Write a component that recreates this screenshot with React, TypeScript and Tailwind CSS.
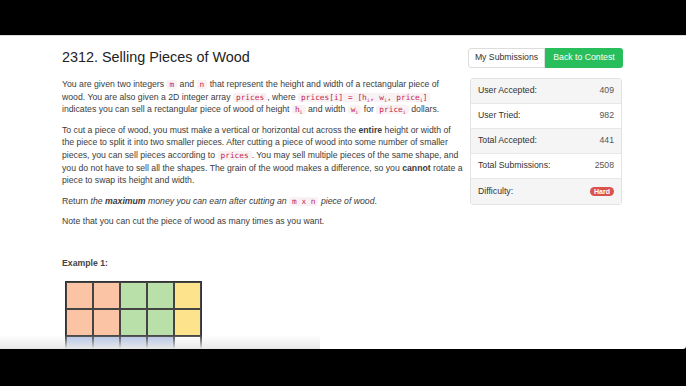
import React from "react";

const C = ({ children }: { children: React.ReactNode }) => (
  <code className="rounded-[2px] bg-[#f9f2f4] px-[3px] py-0 font-['DejaVu_Sans_Mono',monospace] text-[7.8px] leading-none text-[#c7254e]">
    {children}
  </code>
);

const S = ({ children }: { children: React.ReactNode }) => (
  <span className="relative top-[2px] text-[5px] leading-none">{children}</span>
);

const Row = ({ label, value, gray }: { label: string; value: React.ReactNode; gray?: boolean }) => (
  <div className={`flex h-[25px] items-center justify-between border-b border-[#e8e8e8] px-[7px] last:border-b-0 ${gray ? "bg-[#f5f5f5]" : "bg-white"}`}>
    <span>{label}</span>
    <span className="text-[#555]">{value}</span>
  </div>
);

export default function App() {
  const cell = "h-[27px] w-[27px]";
  return (
    <div className="flex h-[386px] w-[686px] flex-col bg-black font-['Liberation_Sans',Arial,sans-serif]">
      <div className="h-[36px] shrink-0 border-b border-[#ddd]" />
      <div className="relative flex h-[313px] shrink-0 gap-[4px] overflow-hidden rounded-br-[3px] bg-white pl-[62px] pt-[10px] text-[#333]">
        <div className="w-[402px] shrink-0">
          <h1 className="mt-[1px] text-[14.4px] leading-[20px] text-[#222]">2312. Selling Pieces of Wood</h1>
          <div className="mt-[11px] text-[8.7px] leading-[12.6px] text-[#3c3c3c]">
            <p>
              You are given two integers <C>m</C> and <C>n</C> that represent the height and width of a rectangular piece of wood. You are also given a 2D integer array <C>prices</C>, where <C>prices[i] = [h<S>i</S>, w<S>i</S>, price<S>i</S>]</C> indicates you can sell a rectangular piece of wood of height <C>h<S>i</S></C> and width <C>w<S>i</S></C> for <C>price<S>i</S></C> dollars.
            </p>
            <p className="mt-[8px]">
              To cut a piece of wood, you must make a vertical or horizontal cut across the <b>entire</b> height or width of the piece to split it into two smaller pieces. After cutting a piece of wood into some number of smaller pieces, you can sell pieces according to <C>prices</C>. You may sell multiple pieces of the same shape, and you do not have to sell all the shapes. The grain of the wood makes a difference, so you <b>cannot</b> rotate a piece to swap its height and width.
            </p>
            <p className="mt-[8px]">
              Return <i>the <b>maximum</b> money you can earn after cutting an </i><C>m x n</C><i> piece of wood</i>.
            </p>
            <p className="mt-[8px]">Note that you can cut the piece of wood as many times as you want.</p>
            <p className="mt-[29px] font-bold text-[#444]">Example 1:</p>
          </div>
          <div className="ml-[3px] mt-[11px] inline-grid grid-cols-5 border border-[#333]">
            {[
              "bg-[#fbc4a4]", "bg-[#fbc4a4]", "bg-[#b9e0a8]", "bg-[#b9e0a8]", "bg-[#fde48c]",
              "bg-[#fbc4a4]", "bg-[#fbc4a4]", "bg-[#b9e0a8]", "bg-[#b9e0a8]", "bg-[#fde48c]",
              "bg-[#b2c4e8]", "bg-[#b2c4e8]", "bg-[#b2c4e8]", "bg-[#b2c4e8]", "bg-white",
            ].map((c, i) => (
              <div key={i} className={`${cell} ${c} border-[0.5px] border-[#444]`} />
            ))}
          </div>
        </div>
        <div className="w-[155px] shrink-0 pt-[2px] text-[8.7px]">
          <div className="flex h-[20px]">
            <div className="flex w-[77px] items-center justify-center rounded-l-[3px] border border-[#ddd] bg-white text-[#333]">My Submissions</div>
            <div className="flex flex-1 items-center justify-center rounded-r-[3px] bg-[#27be5b] text-white">Back to Contest</div>
          </div>
          <div className="ml-[2px] mt-[10px] w-[152px] overflow-hidden rounded-[3px] border border-[#e3e3e3]">
            <Row label="User Accepted:" value="409" gray />
            <Row label="User Tried:" value="982" />
            <Row label="Total Accepted:" value="441" gray />
            <Row label="Total Submissions:" value="2508" />
            <Row
              label="Difficulty:"
              gray
              value={<span className="rounded-full bg-[#d9534f] px-[4px] py-[1px] text-[7px] font-bold text-white">Hard</span>}
            />
          </div>
        </div>
        <div className="pointer-events-none absolute bottom-0 left-0 h-[14px] w-[320px] bg-gradient-to-t from-[#e8e8e8] to-transparent" />
      </div>
    </div>
  );
}
